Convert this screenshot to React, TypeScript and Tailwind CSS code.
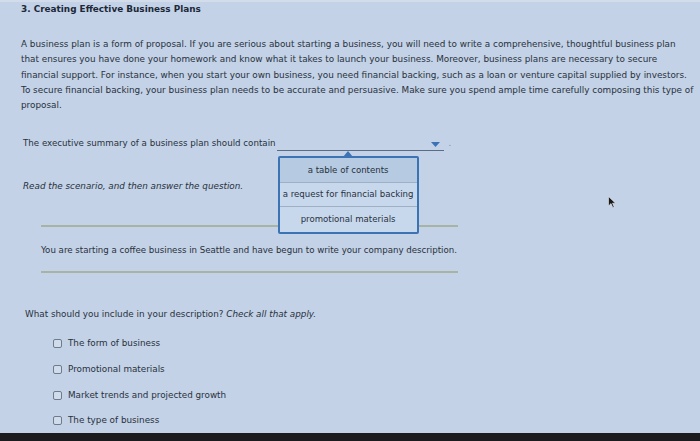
import React from 'react';

const options = ['a table of contents', 'a request for financial backing', 'promotional materials'];

const choices = [
  'The form of business',
  'Promotional materials',
  'Market trends and projected growth',
  'The type of business',
];

const paragraph = [
  'A business plan is a form of proposal. If you are serious about starting a business, you will need to write a comprehensive, thoughtful business plan',
  'that ensures you have done your homework and know what it takes to launch your business. Moreover, business plans are necessary to secure',
  'financial support. For instance, when you start your own business, you need financial backing, such as a loan or venture capital supplied by investors.',
  'To secure financial backing, your business plan needs to be accurate and persuasive. Make sure you spend ample time carefully composing this type of',
  'proposal.',
];

function Dropdown() {
  return (
    <div className="relative ml-[1px] w-[167px] h-[12px] border-b border-[#5a6d86] flex items-end justify-end pr-[4px] pb-[3px]">
      <svg width="9" height="5" viewBox="0 0 9 5">
        <path d="M0 0 H9 L4.5 5 Z" fill="#3b73b5" />
      </svg>
      <div className="absolute left-[1px] top-[17px] w-[141px] z-10">
        <svg className="absolute left-[65px] -top-[5px]" width="10" height="6" viewBox="0 0 10 6">
          <path d="M0 6 L5 0 L10 6 Z" fill="#3b73b5" />
        </svg>
        <div className="border-2 border-[#3b73b5] rounded-[2px] bg-[#c8d8ec] flex flex-col">
          {options.map((o, i) => (
            <div
              key={o}
              className={
                'h-[24.5px] flex items-center justify-center text-[8.6px] whitespace-nowrap text-[#27313e] ' +
                (i === 0 ? 'bg-[#b6cbe2] ' : '') +
                (i < options.length - 1 ? 'border-b border-[#9fb0c4]' : '')
              }
            >
              {o}
            </div>
          ))}
        </div>
      </div>
    </div>
  );
}

export default function App() {
  return (
    <div className="w-[700px] h-[441px] overflow-hidden flex flex-col bg-[#c3d2e6] font-['DejaVu_Sans',Verdana,sans-serif] text-[#28313d]">
      <div className="h-[2px] bg-[#d3dcea]" />
      <div className="relative flex-1 flex flex-col">
        <div className="pl-[21px] pt-[1px] text-[8.9px] leading-[12px] font-bold text-[#1c2838]">
          3. Creating Effective Business Plans
        </div>

        <div className="mt-[22px] pl-[21px] text-[8.85px] leading-[15.3px] whitespace-nowrap">
          {paragraph.map((l) => (
            <div key={l}>{l}</div>
          ))}
        </div>

        <div className="mt-[23px] pl-[23px] flex items-end text-[8.7px] leading-[15px]">
          <span>The executive summary of a business plan should contain</span>
          <Dropdown />
          <span className="ml-[5px] text-[#7d8ea3]">.</span>
        </div>

        <div className="mt-[28px] pl-[23px] text-[8.8px] leading-[15px] italic">
          Read the scenario, and then answer the question.
        </div>

        <div className="ml-[41px] w-[417px] flex flex-col">
          <div className="mt-[31px] h-[2px] bg-[#a7b3a3]" />
          <div className="mt-[16px] text-[8.65px] leading-[15px] whitespace-nowrap">
            You are starting a coffee business in Seattle and have begun to write your company description.
          </div>
          <div className="mt-[13px] h-[2px] bg-[#a7b3a3]" />
        </div>

        <div className="mt-[34px] pl-[25px] text-[8.8px] leading-[15px]">
          What should you include in your description? <span className="italic">Check all that apply.</span>
        </div>

        <div className="mt-[14px] pl-[53px] flex flex-col gap-[10.6px]">
          {choices.map((c) => (
            <label key={c} className="h-[15px] flex items-center gap-[6px] text-[8.8px]">
              <span className="w-[9px] h-[9px] rounded-[2px] border border-[#6d7b8c] bg-[#d0dcec]" />
              <span>{c}</span>
            </label>
          ))}
        </div>

        <svg className="absolute left-[608px] top-[194px]" width="8" height="12" viewBox="0 0 8 12">
          <path d="M0.5 0.5 L0.5 10 L3 7.6 L4.8 11.5 L6.2 10.9 L4.5 7.2 L7.5 7.2 Z" fill="#1a1a1a" stroke="#e8eef6" strokeWidth="0.6" />
        </svg>
      </div>
      <div className="h-[8px] bg-[#1c1c1f]" />
    </div>
  );
}
